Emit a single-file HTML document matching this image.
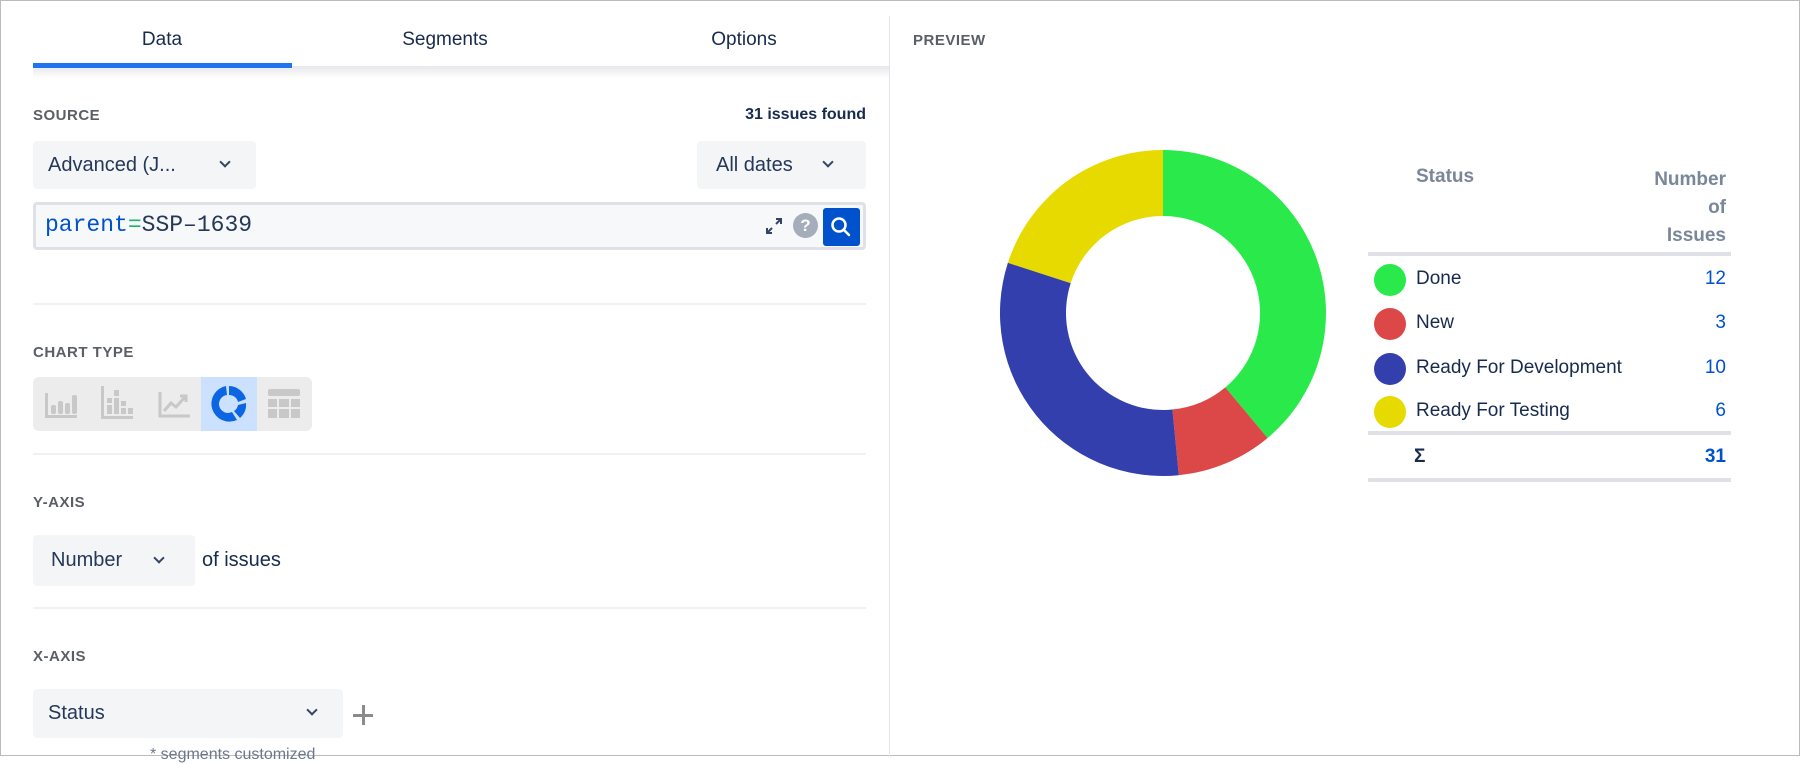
<!DOCTYPE html>
<html><head><meta charset="utf-8"><style>
*{box-sizing:border-box;margin:0;padding:0}
body{width:1800px;height:756px;overflow:hidden;background:#fff;font-family:"Liberation Sans",sans-serif;color:#172b4d;position:relative}
.frame{position:absolute;left:0;top:0;width:1800px;height:756px;border:1px solid #bbb}
.abs{position:absolute}
.lbl{position:absolute;font-size:15px;font-weight:bold;color:#5a5f66;letter-spacing:.5px}
.tab{position:absolute;top:29px;font-size:19px;color:#172b4d;transform:translateX(-50%)}
.dd{position:absolute;background:#f4f5f7;border-radius:4px;font-size:20px;color:#253858;display:flex;align-items:center;padding-left:15px}
.chev{position:absolute;width:8px;height:8px;border-right:2.5px solid #344563;border-bottom:2.5px solid #344563;transform:rotate(45deg)}
.hr{position:absolute;left:33px;width:833px;height:2px;background:#f0f1f3}
.row{position:absolute;left:1368px;width:363px;font-size:19px;color:#172b4d}
.dot{position:absolute;left:6px;width:32px;height:32px;border-radius:50%}
.num{position:absolute;right:5px;color:#0052cc}
.bl{position:absolute;left:1368px;width:363px;height:4px;background:#dfe1e6}
</style></head><body>
<div class="frame"></div>
<div class="abs" style="left:889px;top:16px;width:1px;height:740px;background:#e4e5e8"></div>
<div class="abs" style="left:33px;top:66px;width:856px;height:12px;background:linear-gradient(#e6e7ea,#fff)"></div>
<div class="tab" style="left:162px">Data</div>
<div class="tab" style="left:445px">Segments</div>
<div class="tab" style="left:744px">Options</div>
<div class="abs" style="left:33px;top:63px;width:259px;height:5px;background:#1f74f0"></div>
<div class="lbl" style="left:33px;top:107px">SOURCE</div>
<div class="abs" style="right:934px;top:106px;font-size:16px;font-weight:bold;color:#172b4d">31 issues found</div>
<div class="dd" style="left:33px;top:141px;width:223px;height:48px">Advanced (J...<span class="chev" style="left:188px;top:17px"></span></div>
<div class="dd" style="left:697px;top:141px;width:169px;height:48px;padding-left:19px">All dates<span class="chev" style="left:127px;top:17px"></span></div>
<div class="abs" style="left:33px;top:202px;width:833px;height:48px;border:3px solid #dfe1e6;border-radius:4px;background:#f7f8f9"></div>
<div class="abs" style="left:45px;top:212px;font-family:'Liberation Mono',monospace;font-size:23px;color:#253858"><span style="color:#0052cc">parent</span><span style="color:#20b070">=</span>SSP–1639</div>
<svg class="abs" style="left:764px;top:216px" width="20" height="20" viewBox="0 0 20 20"><path d="M12 3h5v5M17 3l-5 5M8 17H3v-5M3 17l5-5" stroke="#344563" stroke-width="2" fill="none"/></svg>
<div class="abs" style="left:793px;top:213px;width:25px;height:25px;border-radius:50%;background:#a5adba;color:#fff;font-size:17px;font-weight:bold;text-align:center;line-height:25px">?</div>
<div class="abs" style="left:823px;top:208px;width:37px;height:38px;background:#0052cc;border-radius:3px"></div>
<svg class="abs" style="left:829px;top:215px" width="24" height="24" viewBox="0 0 24 24"><circle cx="10" cy="10" r="6.5" stroke="#fff" stroke-width="2.5" fill="none"/><path d="M15 15l5 5" stroke="#fff" stroke-width="2.5" stroke-linecap="round"/></svg>
<div class="hr" style="top:303px"></div>
<div class="lbl" style="left:33px;top:344px">CHART TYPE</div>
<div class="abs" style="left:33px;top:377px;width:279px;height:54px;background:#ececec;border-radius:6px"></div>
<div class="abs" style="left:201px;top:377px;width:56px;height:54px;background:#cce0ff"></div>
<svg class="abs" style="left:45px;top:389px" width="34" height="30" viewBox="0 0 34 30"><g fill="#c8c8c8"><rect x="0" y="26" width="32" height="3"/><rect x="0" y="4" width="3" height="24"/><rect x="6" y="16" width="5" height="9" rx="2"/><rect x="13" y="12" width="5" height="13" rx="2"/><rect x="20" y="14" width="5" height="11" rx="2"/><rect x="27" y="6" width="5" height="19" rx="2"/></g></svg>
<svg class="abs" style="left:101px;top:386px" width="34" height="34" viewBox="0 0 34 34"><g fill="#c8c8c8"><rect x="0" y="30" width="32" height="3"/><rect x="0" y="0" width="3" height="32"/><rect x="6" y="12" width="5" height="5"/><rect x="6" y="19" width="5" height="9"/><rect x="13" y="4" width="5" height="6"/><rect x="13" y="12" width="5" height="16"/><rect x="20" y="15" width="5" height="5"/><rect x="20" y="22" width="5" height="6"/><rect x="27" y="22" width="5" height="6"/></g></svg>
<svg class="abs" style="left:158px;top:388px" width="34" height="32" viewBox="0 0 34 32"><g fill="none" stroke="#c8c8c8" stroke-width="3"><path d="M2 4v24h30"/><path d="M6 23l7-8 5 4 9-10"/><path d="M22 8h6v6"/></g></svg>
<svg class="abs" style="left:210px;top:384px" width="38" height="40" viewBox="0 0 38 40"><path d="M19 2A18 18 0 0 1 36 15L28 18A9 9 0 0 0 19 11Z" fill="#0c66e4"/><path d="M36 19A18 18 0 0 1 30 34L24 27A9 9 0 0 0 28 21Z" fill="#0c66e4"/><path d="M27 36A18 18 0 1 1 16 2L17 11A9 9 0 1 0 22 28Z" fill="#0c66e4"/></svg>
<svg class="abs" style="left:268px;top:389px" width="32" height="29" viewBox="0 0 32 29"><g fill="#c8c8c8"><rect x="0" y="0" width="32" height="7" rx="2"/><rect x="0" y="10" width="9" height="8"/><rect x="11" y="10" width="10" height="8"/><rect x="23" y="10" width="9" height="8"/><rect x="0" y="20" width="9" height="9"/><rect x="11" y="20" width="10" height="9"/><rect x="23" y="20" width="9" height="9"/></g></svg>
<div class="hr" style="top:453px"></div>
<div class="lbl" style="left:33px;top:494px">Y-AXIS</div>
<div class="dd" style="left:33px;top:535px;width:162px;height:51px;padding-left:18px">Number<span class="chev" style="left:122px;top:19px"></span></div>
<div class="abs" style="left:202px;top:549px;font-size:20px;color:#172b4d">of issues</div>
<div class="hr" style="top:607px"></div>
<div class="lbl" style="left:33px;top:648px">X-AXIS</div>
<div class="dd" style="left:33px;top:689px;width:310px;height:49px">Status<span class="chev" style="left:275px;top:17px"></span></div>
<div class="abs" style="left:353px;top:714px;width:20px;height:2.5px;background:#8b8b8b"></div>
<div class="abs" style="left:362px;top:705px;width:2.5px;height:20px;background:#8b8b8b"></div>
<div class="abs" style="left:150px;top:746px;font-size:16px;color:#6b778c">* segments customized</div>
<div class="lbl" style="left:913px;top:32px">PREVIEW</div>
<svg class="abs" style="left:990px;top:140px" width="346" height="346" viewBox="-173 -173 346 346">
<path d="M0,-163 A163,163 0 0 1 104.6,125 L62.3,74.4 A97,97 0 0 0 0,-97 Z" fill="#2aea4b"/>
<path d="M104.6,125 A163,163 0 0 1 15.8,162.2 L9.4,96.5 A97,97 0 0 0 62.3,74.4 Z" fill="#dc4848"/>
<path d="M15.8,162.2 A163,163 0 0 1 -155.1,-50.2 L-92.3,-29.9 A97,97 0 0 0 9.4,96.5 Z" fill="#323fad"/>
<path d="M-155.1,-50.2 A163,163 0 0 1 0,-163 L0,-97 A97,97 0 0 0 -92.3,-29.9 Z" fill="#e6da00"/>
</svg>
<div class="abs" style="left:1416px;top:166px;font-size:19px;font-weight:bold;color:#7a869a">Status</div>
<div class="abs" style="right:74px;top:166px;font-size:19px;font-weight:bold;color:#7a869a;text-align:right;line-height:28px">Number<br>of<br>Issues</div>
<div class="bl" style="top:252px"></div>
<div class="row" style="top:268px;height:26px"><span class="dot" style="background:#2aea4b;top:-4px"></span><span style="position:absolute;left:48px">Done</span><span class="num">12</span></div>
<div class="row" style="top:312px;height:26px"><span class="dot" style="background:#dc4848;top:-4px"></span><span style="position:absolute;left:48px">New</span><span class="num">3</span></div>
<div class="row" style="top:357px;height:26px"><span class="dot" style="background:#323fad;top:-4px"></span><span style="position:absolute;left:48px">Ready For Development</span><span class="num">10</span></div>
<div class="row" style="top:400px;height:26px"><span class="dot" style="background:#e6da00;top:-4px"></span><span style="position:absolute;left:48px">Ready For Testing</span><span class="num">6</span></div>
<div class="bl" style="top:431px"></div>
<div class="row" style="top:446px;height:26px;font-weight:bold"><span style="position:absolute;left:46px">Σ</span><span class="num">31</span></div>
<div class="bl" style="top:478px"></div>
</body></html>
